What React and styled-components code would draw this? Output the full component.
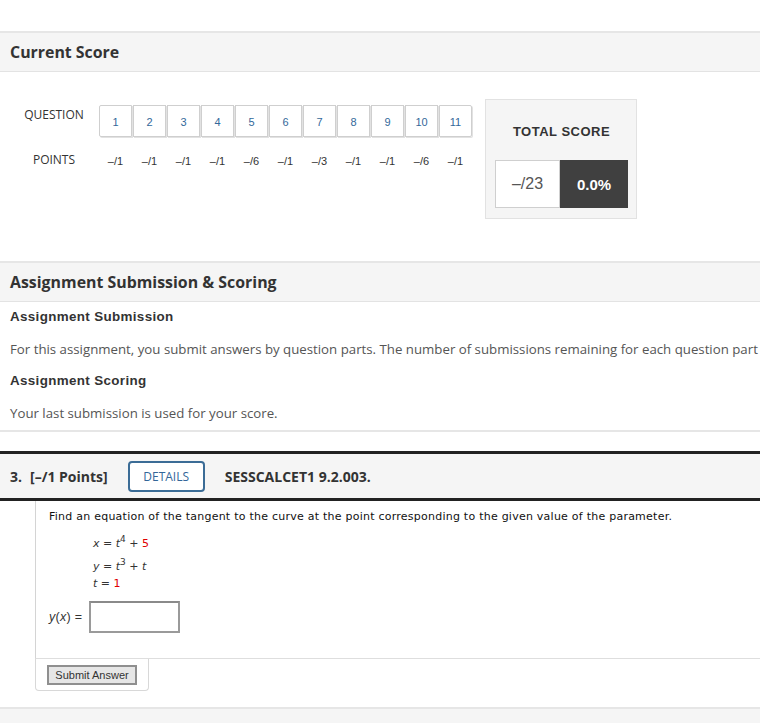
import styled, { createGlobalStyle } from "styled-components";

const GlobalStyle = createGlobalStyle`
  html, body {
    margin: 0;
    padding: 0;
    background: #fff;
  }
  body {
    font-family: "Open Sans", "Liberation Sans", sans-serif;
    color: #333;
    overflow: hidden;
  }
`;

const questions = [
  { n: 1, pts: 1 },
  { n: 2, pts: 1 },
  { n: 3, pts: 1 },
  { n: 4, pts: 1 },
  { n: 5, pts: 6 },
  { n: 6, pts: 1 },
  { n: 7, pts: 3 },
  { n: 8, pts: 1 },
  { n: 9, pts: 1 },
  { n: 10, pts: 6 },
  { n: 11, pts: 1 },
];

//#region layout
const Page = styled.div`
  width: 760px;
  height: 723px;
  overflow: hidden;
  padding-top: 31px;
  box-sizing: border-box;
`;

const SectionHeader = styled.div`
  height: 38px;
  background: #f5f5f5;
  border-top: 2px solid #e6e6e6;
  border-bottom: 1px solid #e3e3e3;
  display: flex;
  align-items: center;
  padding-left: 10px;
`;

const SectionTitle = styled.h2`
  margin: 0;
  font-size: 15.9px;
  font-weight: 700;
  color: #333;
`;

const ScoreArea = styled.div`
  display: flex;
  align-items: flex-start;
  padding: 27px 0 0 22px;
  height: 189px;
  box-sizing: border-box;
`;

const QuestionGrid = styled.div`
  display: grid;
  grid-template-columns: 77px repeat(11, 34px);
  grid-template-rows: 32px 20px;
  row-gap: 14px;
  padding-top: 6px;
`;

const RowLabel = styled.div`
  font-size: 12px;
  color: #333;
  text-align: center;
  width: 64px;
  line-height: 16px;
  padding-top: ${(p) => p.$top}px;
  align-self: start;
`;

const QuestionBox = styled.div`
  width: 33px;
  height: 32px;
  box-sizing: border-box;
  border: 1px solid #cfcfcf;
  box-shadow: 1px 1px 0 #e2e2e2;
  display: flex;
  align-items: center;
  justify-content: center;
  padding-top: 2px;
  font-family: "Liberation Sans", Arial, sans-serif;
  font-size: 11px;
  color: #33689a;
  border-radius: ${(p) => (p.$first ? "2px 0 0 2px" : p.$last ? "0 2px 2px 0" : "0")};
`;

const PointsCell = styled.div`
  width: 33px;
  text-align: center;
  font-family: "Liberation Sans", Arial, sans-serif;
  font-size: 11px;
  line-height: 20px;
  color: #333;
`;

const TotalBox = styled.div`
  margin-left: 12px;
  width: 152px;
  height: 120px;
  box-sizing: border-box;
  background: #f5f5f5;
  border: 1px solid #e2e2e2;
  padding: 0 8px 0 9px;
  display: flex;
  flex-direction: column;
  align-items: center;
`;

const TotalTitle = styled.div`
  font-family: "Liberation Sans", Arial, sans-serif;
  font-weight: 700;
  font-size: 13px;
  letter-spacing: 0.5px;
  color: #333;
  margin-top: 24px;
  line-height: 16px;
`;

const TotalRow = styled.div`
  display: flex;
  margin-top: 20px;
  width: 100%;
  height: 48px;
`;

const TotalCell = styled.div`
  flex: ${(p) => (p.$dark ? "0 0 68px" : "0 0 65px")};
  box-sizing: border-box;
  display: flex;
  align-items: center;
  justify-content: center;
  font-family: "Liberation Sans", Arial, sans-serif;
  font-size: ${(p) => (p.$dark ? "15px" : "16px")};
  font-weight: ${(p) => (p.$dark ? 700 : 400)};
  color: ${(p) => (p.$dark ? "#fff" : "#555")};
  background: ${(p) => (p.$dark ? "#404040" : "#fff")};
  border: 1px solid ${(p) => (p.$dark ? "#404040" : "#cfcfcf")};
`;

const Info = styled.div`
  display: flex;
  flex-direction: column;
  gap: 12px;
  padding: 5px 0 7px 10px;
  border-bottom: 2px solid #e6e6e6;
  overflow: hidden;
`;

const InfoHeading = styled.div`
  font-family: "Liberation Sans", Arial, sans-serif;
  font-weight: 700;
  font-size: 13.4px;
  letter-spacing: 0.35px;
  line-height: 20px;
  color: #333;
`;

const InfoText = styled.div`
  font-size: 13.25px;
  line-height: 20px;
  color: #555;
  white-space: nowrap;
`;

const QuestionHeader = styled.div`
  margin-top: 19px;
  height: 44px;
  background: #f5f5f5;
  border-top: 3px solid #222;
  border-bottom: 3px solid #222;
  display: flex;
  align-items: center;
  padding-left: 10px;
  font-size: 14px;
  font-weight: 700;
  color: #333;
`;

const QNum = styled.span`
  margin-right: 8px;
`;

const DetailsButton = styled.button`
  margin-left: 20px;
  width: 77px;
  height: 31px;
  box-sizing: border-box;
  background: #fff;
  border: 2px solid #3b6c96;
  border-radius: 4px;
  font-family: "Open Sans", sans-serif;
  font-size: 12px;
  color: #336699;
  padding: 0;
  cursor: pointer;
`;

const QCode = styled.span`
  margin-left: 20px;
`;

const QuestionBody = styled.div`
  margin-left: 35px;
  border-left: 1px solid #d4d4d4;
  border-bottom: 1px solid #dedede;
  padding: 9px 0 25px 13px;
  font-family: "DejaVu Sans", Verdana, sans-serif;
  font-size: 11px;
  letter-spacing: 0.24px;
  color: #111;
`;

const Prompt = styled.div`
  line-height: 14px;
  white-space: nowrap;
`;

const MathBlock = styled.div`
  margin: 8px 0 0 44px;
  display: flex;
  flex-direction: column;
  letter-spacing: 0;
`;

const MathLine = styled.div`
  height: ${(p) => p.$lh}px;
  line-height: ${(p) => p.$lh}px;
  color: #333;
`;

const V = styled.i`
  font-style: italic;
`;

const Red = styled.span`
  color: #e00000;
`;

const Sup = styled.sup`
  font-size: 9px;
  line-height: 0;
`;

const AnswerRow = styled.div`
  display: flex;
  align-items: center;
  margin-top: 11px;
  font-family: "Liberation Sans", Arial, sans-serif;
  font-size: 12.5px;
  letter-spacing: 0.3px;
  color: #333;
  gap: 7px;
`;

const AnswerInput = styled.input`
  width: 91px;
  height: 32px;
  box-sizing: border-box;
  border: 2px solid #9a9a9a;
  border-top-color: #8a8a8a;
  background: #fff;
  outline: none;
`;

const SubmitWrap = styled.div`
  margin-left: 35px;
  width: 114px;
  height: 32px;
  box-sizing: border-box;
  border: 1px solid #d8d8d8;
  border-top: none;
  border-radius: 0 0 4px 4px;
  padding: 6px 0 0 11px;
  display: flex;
  align-items: flex-start;
`;

const SubmitButton = styled.button`
  width: 90px;
  height: 20px;
  box-sizing: border-box;
  background: #e6e6e6;
  border: 2px solid #8f8f8f;
  font-family: "Liberation Sans", Arial, sans-serif;
  font-size: 11px;
  color: #333;
  padding: 0;
`;

const Footer = styled.div`
  margin-top: 16px;
  height: 40px;
  background: #f5f5f5;
  border-top: 2px solid #e6e6e6;
`;
//#endregion

function App() {
  return (
    <>
      <GlobalStyle />
      <Page>
        <SectionHeader>
          <SectionTitle>Current Score</SectionTitle>
        </SectionHeader>

        <ScoreArea>
          <QuestionGrid>
            <RowLabel $top={2}>QUESTION</RowLabel>
            {questions.map((q, i) => (
              <QuestionBox key={q.n} $first={i === 0} $last={i === questions.length - 1}>
                {q.n}
              </QuestionBox>
            ))}
            <RowLabel $top={1}>POINTS</RowLabel>
            {questions.map((q) => (
              <PointsCell key={q.n}>–/{q.pts}</PointsCell>
            ))}
          </QuestionGrid>

          <TotalBox>
            <TotalTitle>TOTAL SCORE</TotalTitle>
            <TotalRow>
              <TotalCell>–/23</TotalCell>
              <TotalCell $dark>0.0%</TotalCell>
            </TotalRow>
          </TotalBox>
        </ScoreArea>

        <SectionHeader>
          <SectionTitle>Assignment Submission &amp; Scoring</SectionTitle>
        </SectionHeader>
        <Info>
          <InfoHeading>Assignment Submission</InfoHeading>
          <InfoText>
            For this assignment, you submit answers by question parts. The number of submissions remaining for each question part
          </InfoText>
          <InfoHeading>Assignment Scoring</InfoHeading>
          <InfoText>Your last submission is used for your score.</InfoText>
        </Info>

        <QuestionHeader>
          <QNum>3.</QNum>
          <span>[–/1 Points]</span>
          <DetailsButton>DETAILS</DetailsButton>
          <QCode>SESSCALCET1 9.2.003.</QCode>
        </QuestionHeader>

        <QuestionBody>
          <Prompt>
            Find an equation of the tangent to the curve at the point corresponding to the given value of the parameter.
          </Prompt>
          <MathBlock>
            <MathLine $lh={24}>
              <V>x</V> = <V>t</V>
              <Sup>4</Sup> + <Red>5</Red>
            </MathLine>
            <MathLine $lh={22}>
              <V>y</V> = <V>t</V>
              <Sup>3</Sup> + <V>t</V>
            </MathLine>
            <MathLine $lh={12}>
              <V>t</V> = <Red>1</Red>
            </MathLine>
          </MathBlock>
          <AnswerRow>
            <span>
              <V>y</V>(<V>x</V>) =
            </span>
            <AnswerInput type="text" />
          </AnswerRow>
        </QuestionBody>
        <SubmitWrap>
          <SubmitButton>Submit Answer</SubmitButton>
        </SubmitWrap>

        <Footer />
      </Page>
    </>
  );
}

export default App;
